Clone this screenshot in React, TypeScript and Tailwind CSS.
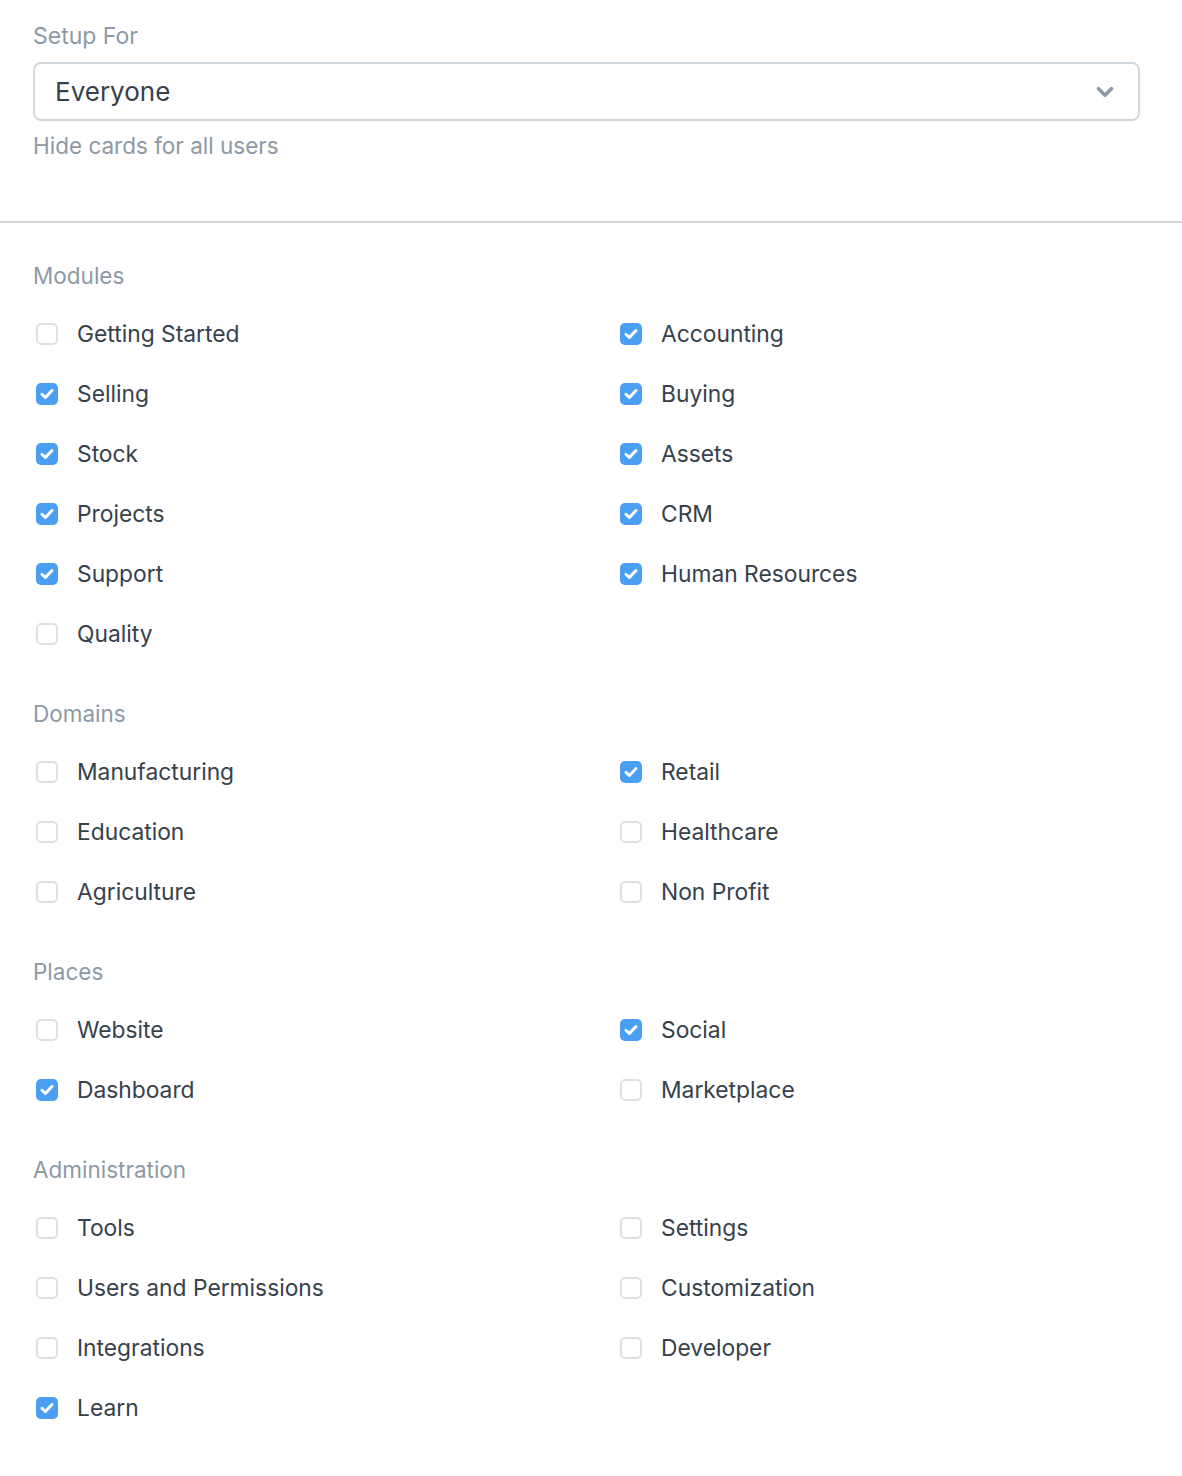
import { ChevronDown } from "lucide-react";

type Item = { label: string; checked: boolean };

const sections: { title: string; items: Item[] }[] = [
  {
    title: "Modules",
    items: [
      { label: "Getting Started", checked: false },
      { label: "Accounting", checked: true },
      { label: "Selling", checked: true },
      { label: "Buying", checked: true },
      { label: "Stock", checked: true },
      { label: "Assets", checked: true },
      { label: "Projects", checked: true },
      { label: "CRM", checked: true },
      { label: "Support", checked: true },
      { label: "Human Resources", checked: true },
      { label: "Quality", checked: false },
    ],
  },
  {
    title: "Domains",
    items: [
      { label: "Manufacturing", checked: false },
      { label: "Retail", checked: true },
      { label: "Education", checked: false },
      { label: "Healthcare", checked: false },
      { label: "Agriculture", checked: false },
      { label: "Non Profit", checked: false },
    ],
  },
  {
    title: "Places",
    items: [
      { label: "Website", checked: false },
      { label: "Social", checked: true },
      { label: "Dashboard", checked: true },
      { label: "Marketplace", checked: false },
    ],
  },
  {
    title: "Administration",
    items: [
      { label: "Tools", checked: false },
      { label: "Settings", checked: false },
      { label: "Users and Permissions", checked: false },
      { label: "Customization", checked: false },
      { label: "Integrations", checked: false },
      { label: "Developer", checked: false },
      { label: "Learn", checked: true },
    ],
  },
];

function Checkbox({ checked }: { checked: boolean }) {
  if (checked) {
    return (
      <span className="flex h-[22px] w-[22px] shrink-0 items-center justify-center rounded-[5px] bg-[#4a9ff5]">
        <svg width="16" height="16" viewBox="0 0 16 16" fill="none">
          <path
            d="M3 8.3 L6.4 11.5 L13 4.5"
            stroke="white"
            strokeWidth="3"
            strokeLinecap="round"
            strokeLinejoin="round"
          />
        </svg>
      </span>
    );
  }
  return (
    <span className="h-[22px] w-[22px] shrink-0 rounded-[5px] border-2 border-[#dbe1e6] bg-white" />
  );
}

export default function App() {
  return (
    <div className="min-h-[1476px] bg-white font-['Inter','Liberation_Sans',sans-serif] antialiased">
      <div className="px-[33px] pt-[21px]">
        <div className="text-[23px] leading-[30px] text-[#8d99a6]">Setup For</div>
        <div className="mt-[11px] flex h-[59px] w-[1107px] items-center justify-between rounded-[8px] border-2 border-[#d1d8dd] bg-white pl-[20px] pr-[20px]">
          <span className="text-[26px] text-[#36414c]">Everyone</span>
          <ChevronDown className="h-[26px] w-[26px] text-[#8d99a6]" strokeWidth={3.4} />
        </div>
        <div className="mt-[10px] text-[22.5px] leading-[30px] text-[#8d99a6]">
          Hide cards for all users
        </div>
      </div>
      <div className="mt-[60px] h-[2px] w-full bg-[#d1d8dd]" />
      <div className="px-[33px] pt-[38px]">
        {sections.map((s) => (
          <div key={s.title} className="mb-[35px]">
            <div className="text-[22.5px] leading-[30px] text-[#8d99a6]">{s.title}</div>
            <div className="mt-[13px] grid grid-cols-[584px_1fr]">
              {s.items.map((it) => (
                <div key={it.label} className="flex h-[60px] items-center pl-[3px]">
                  <Checkbox checked={it.checked} />
                  <span className="ml-[19px] text-[22.8px] text-[#36414c]">{it.label}</span>
                </div>
              ))}
            </div>
          </div>
        ))}
      </div>
    </div>
  );
}
